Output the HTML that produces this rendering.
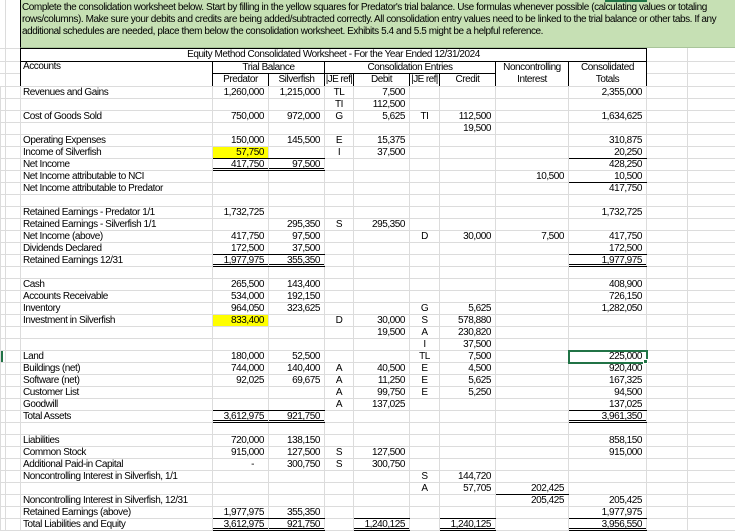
<!DOCTYPE html>
<html><head><meta charset="utf-8">
<style>
*{box-sizing:border-box;margin:0;padding:0}
body{width:735px;height:531px;overflow:hidden;background:#fff;font-family:"Liberation Sans",Arial,sans-serif;font-size:10px;letter-spacing:-0.45px;color:#000;position:relative}
.a{position:absolute}
.bx{position:absolute;border:1px solid #000;text-align:center;line-height:11px;white-space:nowrap;background:#fff}
table{position:absolute;left:0;top:86px;border-collapse:collapse;table-layout:fixed;width:735px}
tr{height:12px}
td{border:1px solid #dcdcdc;height:12px;line-height:10px;padding:1px 4px 0 0;text-align:right;white-space:nowrap;overflow:visible;font-size:10px;vertical-align:top}
td.l{text-align:left;padding:1px 0 0 2px;overflow:hidden}
td.c{text-align:center;padding:1px 0 0 0}
.y{background:#ffff00}
.s{border-bottom:1px solid #000}
.d{border-bottom:1px solid #000;box-shadow:inset 0 -1px 0 #fff,inset 0 -2px 0 #000;line-height:9px}
.sel{outline:2px solid #217346;outline-offset:-1px;position:relative}
.vl{position:absolute;width:1px;background:#dcdcdc}
.hl{position:absolute;height:1px;background:#dcdcdc}
</style></head><body>
<div class="vl" style="left:5px;top:0;height:86px"></div>
<div class="vl" style="left:20px;top:0;height:86px"></div>
<div class="hl" style="left:0;top:48px;width:20px"></div>
<div class="hl" style="left:0;top:61px;width:20px"></div>
<div class="hl" style="left:0;top:73px;width:20px"></div>
<div class="a" style="left:20px;top:0;width:715px;height:48px;background:#c6e0b4;border-left:1px solid #000;border-bottom:1px solid #a9c59a"></div>
<div class="a" style="left:605px;top:0;width:42px;height:2px;background:#217346"></div>
<div class="a" style="left:22px;top:2px;width:713px;line-height:12px;font-size:10px;white-space:nowrap;letter-spacing:-0.43px">Complete the consolidation worksheet below. Start by filling in the yellow squares for Predator's trial balance. Use formulas whenever possible (calculating values or totaling<br>rows/columns). Make sure your debits and credits are being added/subtracted correctly. All consolidation entry values need to be linked to the trial balance or other tabs. If any<br>additional schedules are needed, place them below the consolidation worksheet. Exhibits 5.4 and 5.5 might be a helpful reference.</div>
<div class="vl" style="left:687px;top:48px;height:38px"></div>
<div class="hl" style="left:646px;top:61px;width:89px"></div>
<div class="hl" style="left:646px;top:73px;width:89px"></div>
<div class="bx" style="left:20px;top:48px;width:627px;height:14px">Equity Method Consolidated Worksheet - For the Year Ended 12/31/2024</div>
<div class="a" style="left:20px;top:61px;width:193px;height:25px;border-left:1px solid #000;padding-left:2px;line-height:11px">Accounts</div>
<div class="bx" style="left:212px;top:61px;width:113px;height:13px">Trial Balance</div>
<div class="bx" style="left:324px;top:61px;width:172px;height:13px">Consolidation Entries</div>
<div class="bx" style="left:495px;top:61px;width:74px;height:26px;line-height:12px">Noncontrolling<br>Interest</div>
<div class="bx" style="left:568px;top:61px;width:79px;height:26px;line-height:12px">Consolidated<br>Totals</div>
<div class="bx" style="left:212px;top:73px;width:57px;height:14px">Predator</div>
<div class="bx" style="left:268px;top:73px;width:57px;height:14px">Silverfish</div>
<div class="bx" style="left:324px;top:73px;width:30px;height:14px;letter-spacing:-0.6px">|JE ref|</div>
<div class="bx" style="left:353px;top:73px;width:57px;height:14px">Debit</div>
<div class="bx" style="left:409px;top:73px;width:31px;height:14px;letter-spacing:-0.6px">|JE ref|</div>
<div class="bx" style="left:439px;top:73px;width:57px;height:14px">Credit</div>
<div class="a" style="left:0;top:350px;width:3px;height:12px;background:#217346"></div>
<table>
<colgroup><col style="width:5px"><col style="width:15px"><col style="width:192px"><col style="width:56px"><col style="width:56px"><col style="width:29px"><col style="width:56px"><col style="width:30px"><col style="width:56px"><col style="width:73px"><col style="width:78px"><col style="width:41px"><col style="width:48px"></colgroup>
<tr><td></td><td></td><td class="l">Revenues and Gains</td><td>1,260,000</td><td>1,215,000</td><td class="c">TL</td><td>7,500</td><td class="c"></td><td></td><td></td><td>2,355,000</td><td></td><td></td></tr>
<tr><td></td><td></td><td class="l"></td><td></td><td></td><td class="c">TI</td><td>112,500</td><td class="c"></td><td></td><td></td><td></td><td></td><td></td></tr>
<tr><td></td><td></td><td class="l">Cost of Goods Sold</td><td>750,000</td><td>972,000</td><td class="c">G</td><td>5,625</td><td class="c">TI</td><td>112,500</td><td></td><td>1,634,625</td><td></td><td></td></tr>
<tr><td></td><td></td><td class="l"></td><td></td><td></td><td class="c"></td><td></td><td class="c"></td><td>19,500</td><td></td><td></td><td></td><td></td></tr>
<tr><td></td><td></td><td class="l">Operating Expenses</td><td>150,000</td><td>145,500</td><td class="c">E</td><td>15,375</td><td class="c"></td><td></td><td></td><td>310,875</td><td></td><td></td></tr>
<tr><td></td><td></td><td class="l">Income of Silverfish</td><td class="y s">57,750</td><td class="s"></td><td class="c">I</td><td>37,500</td><td class="c"></td><td></td><td></td><td class="s">20,250</td><td></td><td></td></tr>
<tr><td></td><td></td><td class="l">Net Income</td><td class="d">417,750</td><td class="d">97,500</td><td class="c"></td><td></td><td class="c"></td><td></td><td></td><td>428,250</td><td></td><td></td></tr>
<tr><td></td><td></td><td class="l">Net Income attributable to NCI</td><td></td><td></td><td class="c"></td><td></td><td class="c"></td><td></td><td>10,500</td><td class="s">10,500</td><td></td><td></td></tr>
<tr><td></td><td></td><td class="l">Net Income attributable to Predator</td><td></td><td></td><td class="c"></td><td></td><td class="c"></td><td></td><td></td><td>417,750</td><td></td><td></td></tr>
<tr><td></td><td></td><td class="l"></td><td></td><td></td><td class="c"></td><td></td><td class="c"></td><td></td><td></td><td></td><td></td><td></td></tr>
<tr><td></td><td></td><td class="l">Retained Earnings - Predator 1/1</td><td>1,732,725</td><td></td><td class="c"></td><td></td><td class="c"></td><td></td><td></td><td>1,732,725</td><td></td><td></td></tr>
<tr><td></td><td></td><td class="l">Retained Earnings - Silverfish 1/1</td><td></td><td>295,350</td><td class="c">S</td><td>295,350</td><td class="c"></td><td></td><td></td><td></td><td></td><td></td></tr>
<tr><td></td><td></td><td class="l">Net Income (above)</td><td>417,750</td><td>97,500</td><td class="c"></td><td></td><td class="c">D</td><td>30,000</td><td>7,500</td><td>417,750</td><td></td><td></td></tr>
<tr><td></td><td></td><td class="l">Dividends Declared</td><td class="s">172,500</td><td class="s">37,500</td><td class="c"></td><td></td><td class="c"></td><td></td><td></td><td class="s">172,500</td><td></td><td></td></tr>
<tr><td></td><td></td><td class="l">Retained Earnings 12/31</td><td class="d">1,977,975</td><td class="d">355,350</td><td class="c"></td><td></td><td class="c"></td><td></td><td></td><td class="d">1,977,975</td><td></td><td></td></tr>
<tr><td></td><td></td><td class="l"></td><td></td><td></td><td class="c"></td><td></td><td class="c"></td><td></td><td></td><td></td><td></td><td></td></tr>
<tr><td></td><td></td><td class="l">Cash</td><td>265,500</td><td>143,400</td><td class="c"></td><td></td><td class="c"></td><td></td><td></td><td>408,900</td><td></td><td></td></tr>
<tr><td></td><td></td><td class="l">Accounts Receivable</td><td>534,000</td><td>192,150</td><td class="c"></td><td></td><td class="c"></td><td></td><td></td><td>726,150</td><td></td><td></td></tr>
<tr><td></td><td></td><td class="l">Inventory</td><td>964,050</td><td>323,625</td><td class="c"></td><td></td><td class="c">G</td><td>5,625</td><td></td><td>1,282,050</td><td></td><td></td></tr>
<tr><td></td><td></td><td class="l">Investment in Silverfish</td><td class="y">833,400</td><td></td><td class="c">D</td><td>30,000</td><td class="c">S</td><td>578,880</td><td></td><td></td><td></td><td></td></tr>
<tr><td></td><td></td><td class="l"></td><td></td><td></td><td class="c"></td><td>19,500</td><td class="c">A</td><td>230,820</td><td></td><td></td><td></td><td></td></tr>
<tr><td></td><td></td><td class="l"></td><td></td><td></td><td class="c"></td><td></td><td class="c">I</td><td>37,500</td><td></td><td></td><td></td><td></td></tr>
<tr><td></td><td></td><td class="l">Land</td><td>180,000</td><td>52,500</td><td class="c"></td><td></td><td class="c">TL</td><td>7,500</td><td></td><td class="sel">225,000</td><td></td><td></td></tr>
<tr><td></td><td></td><td class="l">Buildings (net)</td><td>744,000</td><td>140,400</td><td class="c">A</td><td>40,500</td><td class="c">E</td><td>4,500</td><td></td><td>920,400</td><td></td><td></td></tr>
<tr><td></td><td></td><td class="l">Software (net)</td><td>92,025</td><td>69,675</td><td class="c">A</td><td>11,250</td><td class="c">E</td><td>5,625</td><td></td><td>167,325</td><td></td><td></td></tr>
<tr><td></td><td></td><td class="l">Customer List</td><td></td><td></td><td class="c">A</td><td>99,750</td><td class="c">E</td><td>5,250</td><td></td><td>94,500</td><td></td><td></td></tr>
<tr><td></td><td></td><td class="l">Goodwill</td><td class="s"></td><td class="s"></td><td class="c">A</td><td>137,025</td><td class="c"></td><td></td><td></td><td class="s">137,025</td><td></td><td></td></tr>
<tr><td></td><td></td><td class="l">Total Assets</td><td class="d">3,612,975</td><td class="d">921,750</td><td class="c"></td><td></td><td class="c"></td><td></td><td></td><td class="d">3,961,350</td><td></td><td></td></tr>
<tr><td></td><td></td><td class="l"></td><td></td><td></td><td class="c"></td><td></td><td class="c"></td><td></td><td></td><td></td><td></td><td></td></tr>
<tr><td></td><td></td><td class="l">Liabilities</td><td>720,000</td><td>138,150</td><td class="c"></td><td></td><td class="c"></td><td></td><td></td><td>858,150</td><td></td><td></td></tr>
<tr><td></td><td></td><td class="l">Common Stock</td><td>915,000</td><td>127,500</td><td class="c">S</td><td>127,500</td><td class="c"></td><td></td><td></td><td>915,000</td><td></td><td></td></tr>
<tr><td></td><td></td><td class="l">Additional Paid-in Capital</td><td style="padding-right:14px">-</td><td>300,750</td><td class="c">S</td><td>300,750</td><td class="c"></td><td></td><td></td><td></td><td></td><td></td></tr>
<tr><td></td><td></td><td class="l">Noncontrolling Interest in Silverfish, 1/1</td><td></td><td></td><td class="c"></td><td></td><td class="c">S</td><td>144,720</td><td></td><td></td><td></td><td></td></tr>
<tr><td></td><td></td><td class="l"></td><td></td><td></td><td class="c"></td><td></td><td class="c">A</td><td>57,705</td><td class="s">202,425</td><td></td><td></td><td></td></tr>
<tr><td></td><td></td><td class="l">Noncontrolling Interest in Silverfish, 12/31</td><td></td><td></td><td class="c"></td><td></td><td class="c"></td><td></td><td>205,425</td><td>205,425</td><td></td><td></td></tr>
<tr><td></td><td></td><td class="l">Retained Earnings (above)</td><td class="s">1,977,975</td><td class="s">355,350</td><td class="c"></td><td class="s"></td><td class="c"></td><td class="s"></td><td></td><td class="s">1,977,975</td><td></td><td></td></tr>
<tr><td></td><td></td><td class="l">Total Liabilities and Equity</td><td class="d">3,612,975</td><td class="d">921,750</td><td class="c"></td><td class="d">1,240,125</td><td class="c"></td><td class="d">1,240,125</td><td></td><td class="d">3,956,550</td><td></td><td></td></tr>
</table>
<div class="a" style="left:643px;top:359px;width:5px;height:5px;background:#217346;border:1px solid #fff"></div>
</body></html>
